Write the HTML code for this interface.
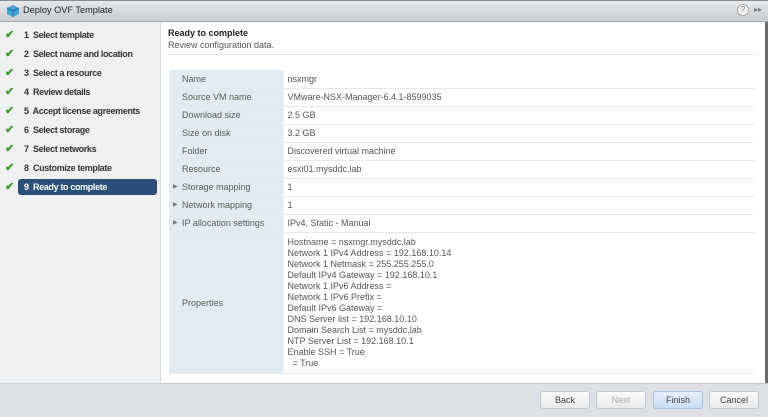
<!DOCTYPE html><html><head><style>
*{margin:0;padding:0;box-sizing:border-box}
body{width:768px;height:417px;overflow:hidden;font-family:"Liberation Sans",sans-serif;background:#fff;position:relative;font-size:9px;color:#333}
.title{position:absolute;left:0;top:0;width:768px;height:22px;background:linear-gradient(#e6e8ea,#c9ccd0);border-bottom:1px solid #a8acb0;border-top:1px solid #8a8d90}
.title span{position:absolute;left:23px;top:4px;font-size:9.2px;color:#222}
.left{position:absolute;left:0;top:22px;width:161px;height:361px;background:#eef0f2;border-right:1px solid #d5d8db}
.it{position:absolute;left:0;height:16px;width:161px;font-size:9px;font-weight:bold;color:#333;letter-spacing:-0.35px}
.it .c{position:absolute;left:5px;top:1px;color:#3a9a2a;font-size:11px}
.it .t{position:absolute;left:24px;top:3px}
.sel{left:18px!important;width:139px!important;background:#2c4f7a;border-radius:3px;color:#fff}
.sel .t{left:6px}.sel .c{left:-13px}
.foot{position:absolute;left:0;top:383px;width:768px;height:34px;background:#dde1e6;border-top:1px solid #c8ccd1}
.btn{position:absolute;top:391px;height:18px;width:50px;border:1px solid #c4c8cc;border-radius:3px;background:linear-gradient(#fbfbfb,#e8e9ea);font-size:9px;text-align:center;line-height:16px;color:#444}
table{position:absolute;left:169px;top:70px;width:586px;border-collapse:collapse;font-size:9px}
td{height:18px;border-bottom:1px solid #e6e9ec;padding:0 0 0 13px;color:#555;vertical-align:middle}
td.l{width:114px;background:#e2ebf3;color:#5a5a5a}
td.v{padding-left:4px;color:#555;border-left:1px solid #eef0f2}
.ar{position:absolute;margin-left:-9px;font-size:6px;color:#777;margin-top:1px}
</style></head><body>
<div class="title"><svg style="position:absolute;left:6px;top:3px" width="14" height="14"><path d="M7 1 L13 4 L13 10 L7 13 L1 10 L1 4Z" fill="#4aa3d8"/><path d="M7 7 L13 4 M7 7 L1 4 M7 7 L7 13" stroke="#1e6fa8" stroke-width="1"/></svg><span>Deploy OVF Template</span>
<div style="position:absolute;left:737px;top:3px;width:12px;height:12px;border-radius:50%;background:#f5f5f5;border:1px solid #aaa;font-size:8px;text-align:center;line-height:10px;color:#777">?</div>
<div style="position:absolute;left:754px;top:4px;font-size:8px;color:#777">▸▸</div></div>
<div class="left">
<div class="it" style="top:5px"><span class="c">✔</span><span class="t">1&nbsp; Select template</span></div>
<div class="it" style="top:24px"><span class="c">✔</span><span class="t">2&nbsp; Select name and location</span></div>
<div class="it" style="top:43px"><span class="c">✔</span><span class="t">3&nbsp; Select a resource</span></div>
<div class="it" style="top:62px"><span class="c">✔</span><span class="t">4&nbsp; Review details</span></div>
<div class="it" style="top:81px"><span class="c">✔</span><span class="t">5&nbsp; Accept license agreements</span></div>
<div class="it" style="top:100px"><span class="c">✔</span><span class="t">6&nbsp; Select storage</span></div>
<div class="it" style="top:119px"><span class="c">✔</span><span class="t">7&nbsp; Select networks</span></div>
<div class="it" style="top:138px"><span class="c">✔</span><span class="t">8&nbsp; Customize template</span></div>
<div class="it sel" style="top:157px"><span class="c">✔</span><span class="t">9&nbsp; Ready to complete</span></div>
</div>
<div style="position:absolute;left:168px;top:28px;font-weight:bold;font-size:9px;color:#222">Ready to complete</div>
<div style="position:absolute;left:168px;top:40px;font-size:9px;color:#555">Review configuration data.</div>
<div style="position:absolute;left:168px;top:54px;width:587px;border-top:1px solid #e3e5e7"></div>
<div style="position:absolute;left:765px;top:22px;width:3px;height:395px;background:#6a6d70"></div>
<table>
<tr><td class="l">Name</td><td class="v">nsxmgr</td></tr>
<tr><td class="l">Source VM name</td><td class="v">VMware-NSX-Manager-6.4.1-8599035</td></tr>
<tr><td class="l">Download size</td><td class="v">2.5 GB</td></tr>
<tr><td class="l">Size on disk</td><td class="v">3.2 GB</td></tr>
<tr><td class="l">Folder</td><td class="v">Discovered virtual machine</td></tr>
<tr><td class="l">Resource</td><td class="v">esxi01.mysddc.lab</td></tr>
<tr><td class="l"><span class="ar">▶</span>Storage mapping</td><td class="v">1</td></tr>
<tr><td class="l"><span class="ar">▶</span>Network mapping</td><td class="v">1</td></tr>
<tr><td class="l"><span class="ar">▶</span>IP allocation settings</td><td class="v">IPv4, Static - Manual</td></tr>
<tr><td class="l" style="height:141px">Properties</td><td class="v" style="line-height:11px;padding-top:4px;padding-bottom:4px">Hostname = nsxmgr.mysddc.lab<br>Network 1 IPv4 Address = 192.168.10.14<br>Network 1 Netmask = 255.255.255.0<br>Default IPv4 Gateway = 192.168.10.1<br>Network 1 IPv6 Address =<br>Network 1 IPv6 Prefix =<br>Default IPv6 Gateway =<br>DNS Server list = 192.168.10.10<br>Domain Search List = mysddc.lab<br>NTP Server List = 192.168.10.1<br>Enable SSH = True<br>&nbsp; = True</td></tr>
</table>
<div class="foot"></div>
<div class="btn" style="left:540px">Back</div>
<div class="btn" style="left:596px;color:#aaa">Next</div>
<div class="btn" style="left:653px;background:linear-gradient(#e6f0fb,#c8dcf2);border-color:#a9c2de">Finish</div>
<div class="btn" style="left:709px">Cancel</div>
</body></html>
